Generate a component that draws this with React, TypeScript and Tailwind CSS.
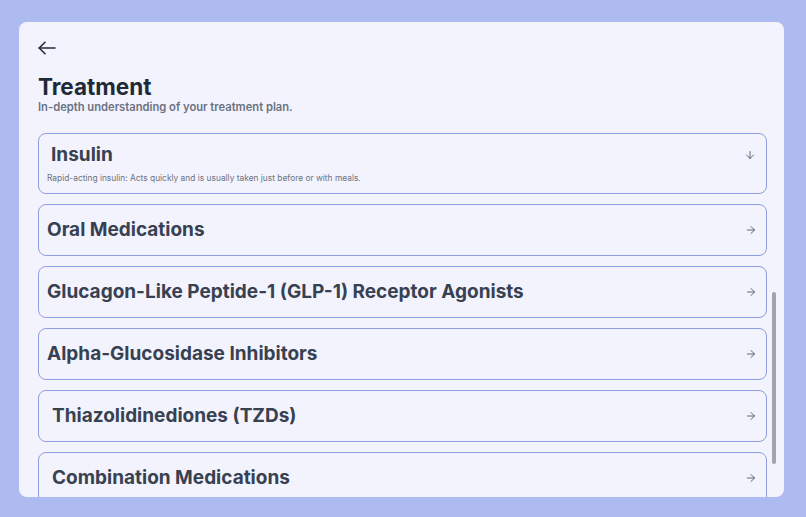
import { ArrowRight, ArrowDown } from "lucide-react";

const items = [
  { title: "Oral Medications", pad: "pl-[8px]" },
  { title: "Glucagon-Like Peptide-1 (GLP-1) Receptor Agonists", pad: "pl-[8px]" },
  { title: "Alpha-Glucosidase Inhibitors", pad: "pl-[8px]" },
  { title: "Thiazolidinediones (TZDs)", pad: "pl-[13px]" },
  { title: "Combination Medications", pad: "pl-[13px]" },
];

function BackArrow() {
  return (
    <svg width="18" height="14" viewBox="0 0 18 14" fill="none" stroke="currentColor" strokeWidth="1.6" strokeLinecap="round" strokeLinejoin="round">
      <path d="M17 7H1.2" />
      <path d="M7 1.2L1.2 7L7 12.8" />
    </svg>
  );
}

export default function App() {
  return (
    <div
      className="h-[517px] w-[806px] overflow-hidden bg-[#adbbf1] pb-[20px] pl-[19px] pr-[22px] pt-[22px]"
      style={{ fontFamily: "Inter, 'Noto Sans', sans-serif" }}
    >
      <div className="relative flex h-full flex-col overflow-hidden rounded-lg bg-[#f3f3fd] pl-[19px] pr-[17px]">
        <button className="mt-[19px] flex h-[14px] w-[18px] items-center text-gray-800">
          <BackArrow />
        </button>

        <h1 className="mt-[19px] text-[22.5px] font-bold leading-[26px] text-[#1f2937]">Treatment</h1>
        <p className="mt-[1px] text-[11.2px] font-semibold leading-[12px] text-gray-500">
          In-depth understanding of your treatment plan.
        </p>

        <div className="mt-[20px] flex flex-col gap-[10px]">
          <div className="flex h-[61px] shrink-0 flex-col rounded-lg border border-[#8e9ddf] pl-[8px] pr-[10px]">
            <div className="flex items-center justify-between pt-[10px]">
              <span className="pl-[4px] text-[19px] font-bold leading-[22px] text-[#374151]">Insulin</span>
              <ArrowDown size={12} strokeWidth={1.75} className="text-gray-600" />
            </div>
            <p className="mt-[7px] text-[8.4px] leading-[10px] text-gray-500">
              Rapid-acting insulin: Acts quickly and is usually taken just before or with meals.
            </p>
          </div>

          {items.map((it) => (
            <div
              key={it.title}
              className={`flex h-[52px] shrink-0 items-center justify-between rounded-lg border border-[#8e9ddf] pr-[9px] ${it.pad}`}
            >
              <span className="text-[19px] font-bold leading-[22px] text-[#374151]">{it.title}</span>
              <ArrowRight size={12} strokeWidth={1.75} className="text-gray-600" />
            </div>
          ))}
        </div>

        <div className="absolute right-[8px] top-[270px] h-[172px] w-[4px] rounded-full bg-[#a3a3ad]" />
      </div>
    </div>
  );
}
